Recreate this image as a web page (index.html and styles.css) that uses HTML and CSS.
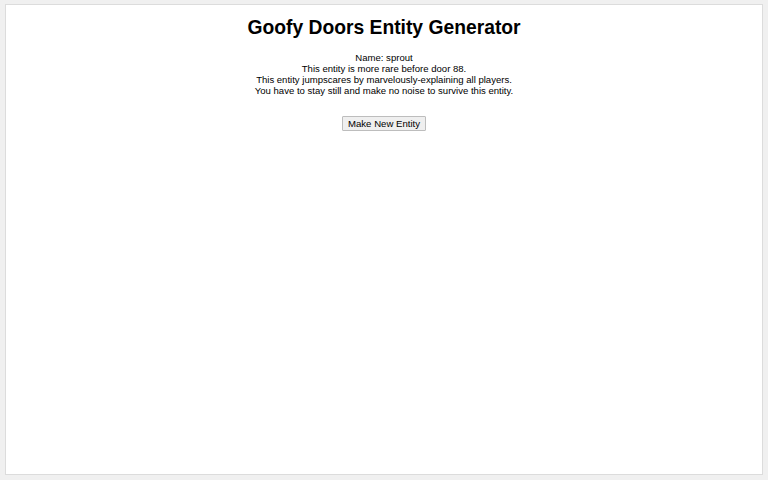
FILE: index.html
```html
<!DOCTYPE html>
<html>
<head>
<meta charset="utf-8">
<link rel="stylesheet" href="styles.css">
</head>
<body>
<div class="page">
  <h1 class="title">Goofy Doors Entity Generator</h1>
  <div class="info">
    <div>Name: sprout</div>
    <div>This entity is more rare before door 88.</div>
    <div>This entity jumpscares by marvelously-explaining all players.</div>
    <div>You have to stay still and make no noise to survive this entity.</div>
  </div>
  <button class="btn">Make New Entity</button>
</div>
</body>
</html>
```
FILE: styles.css
```css
html, body {
  margin: 0;
  padding: 0;
  background: #f0f0f0;
}
body {
  padding: 4px 5px 0 5px;
  font-family: "Liberation Sans", Arial, sans-serif;
  color: #000;
}
.page {
  box-sizing: border-box;
  width: 758px;
  height: 471px;
  background: #fff;
  border: 1px solid #dcdcdc;
  display: flex;
  flex-direction: column;
  align-items: center;
}
.title {
  margin: 12px 0 0 0;
  font-size: 19.3px;
  line-height: 22px;
  font-weight: bold;
}
.info {
  margin-top: 13px;
  font-size: 9.55px;
  line-height: 11px;
  text-align: center;
}
.btn {
  margin-top: 20px;
  font-family: "Liberation Sans", Arial, sans-serif;
  font-size: 9.6px;
  line-height: 11px;
  padding: 1px 5px;
  background: #efefef;
  border: 1px solid #bdbdbd;
  border-radius: 1px;
  color: #000;
}
```
